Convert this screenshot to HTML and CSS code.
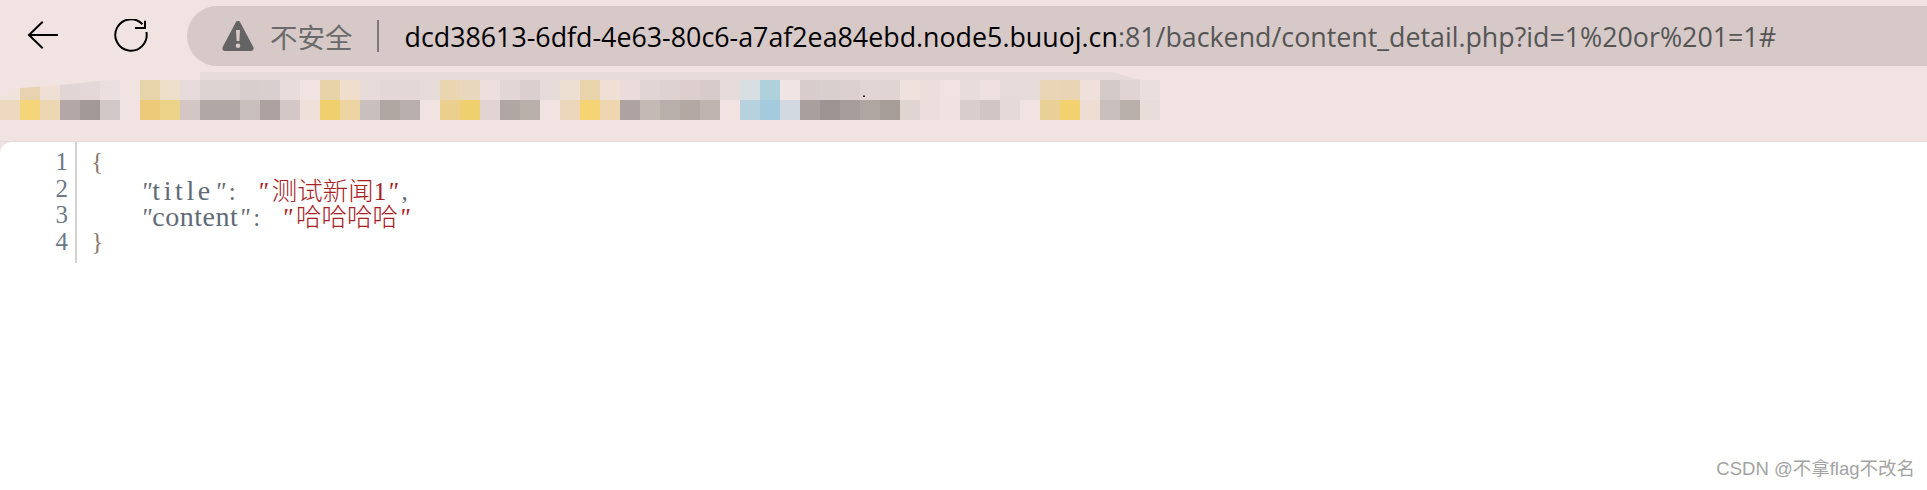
FILE: index.html
```html
<!DOCTYPE html>
<html lang="zh">
<head>
<meta charset="utf-8">
<title>content_detail</title>
<link rel="stylesheet" href="styles.css">
</head>
<body>
<header class="chrome">
  <div class="toolbar">
    <svg class="nav-icon back" width="34" height="30" viewBox="0 0 34 30"><path d="M32 14H2.500M16.700.7 3 14l13.700 13.300"/></svg>
    <svg class="nav-icon reload" width="34" height="34" viewBox="0 0 34 34"><path d="M32.400 13A15.700 15.700 0 1 1 28.500 5.300M31 1.700V9H21"/></svg>
    <div class="address">
      <svg class="warn" width="32" height="30" viewBox="0 0 32 30"><path fill-rule="evenodd" d="M16 0c1 0 1.800.5 2.300 1.400l13 24.500c1 1.900-.2 4.100-2.300 4.100H3C.9 30-.3 27.800.7 25.900l13-24.500C14.200.5 15 0 16 0Zm-2 9 .6 11h2.800L18 9Zm2 13.500a2.300 2.300 0 1 0 0 4.600 2.300 2.300 0 0 0 0-4.600Z"/></svg>
      <span class="insecure">不安全</span>
      <span class="divider"></span>
      <span class="url"><span class="host">dcd38613-6dfd-4e63-80c6-a7af2ea84ebd.node5.buuoj.cn</span>:81/backend/content_detail.php?id=1%20or%201=1#</span>
    </div>
  </div>
  <svg class="bookmarks" width="1160" height="69" viewBox="0 72 1160 69">
    <path class="smear" d="M200 80V71L240 66H1089L1140 80 1159 85V100H200Z"/>
    <g id="cells"></g>
    <path class="cover" d="M0 80H120L100 81 60 85 20 88 0 97Z"/>
    <rect x="863" y="95.500" width="2" height="1.500" fill="#222"/>
  </svg>
</header>
<main class="page">
  <div class="gutter">
    <div>1</div><div>2</div><div>3</div><div>4</div>
  </div>
  <div class="code">
    <div class="line"><span class="cell pun">{</span></div>
    <div class="line indent"><span class="key"><i class="cell">"</i><span class="title">title</span><i class="cell">"</i><span class="cell">:</span></span><span class="str gap"><i class="cell">"</i><span class="cjk">测试新闻</span><span class="digit">1</span><i class="cell">"</i></span><span class="cell key">,</span></div>
    <div class="line indent"><span class="key"><i class="cell">"</i><span class="content">content</span><i class="cell">"</i><span class="cell">:</span></span><span class="str gap"><i class="cell">"</i><span class="cjk">哈哈哈哈</span><i class="cell">"</i></span></div>
    <div class="line"><span class="cell pun">}</span></div>
  </div>
</main>
<div class="watermark">CSDN @不拿flag不改名</div>
<script src="mosaic.js"></script>
</body>
</html>
```

FILE: styles.css
```css
* { box-sizing: border-box; }
html, body { margin: 0; height: 100%; }
body {
  width: 1927px;
  height: 490px;
  overflow: hidden;
  background: #f0e3e2;
  position: relative;
  display: flex;
  flex-direction: column;
  font-family: "Open Sans", "Noto Sans CJK SC", sans-serif;
}
.chrome {
  height: 142px;
  flex: none;
  border-bottom: 1px solid #e6dad9;
}
.toolbar {
  height: 72px;
  padding: 6px 0 6px 26px;
  display: flex;
  align-items: center;
}
.nav-icon { fill: none; stroke: #000; stroke-width: 2; flex: none; }
.back { margin-right: 54px; }
.reload { margin-right: 39px; }
.address {
  flex: 1;
  height: 60px;
  background: #d6c9c8;
  border-radius: 30px 0 0 30px;
  display: flex;
  align-items: center;
  padding-left: 35px;
  white-space: nowrap;
}
.warn { fill: #646464; flex: none; margin-right: 16px; }
.insecure { font-size: 27.500px; color: #6b6b6b; font-family: "Noto Sans CJK SC", sans-serif; }
.divider { width: 2px; height: 32px; background: #7d7878; margin: 0 26px 0 24px; }
.url { font-size: 26.800px; color: #555; }
.host { color: #000; }
.bookmarks { display: block; }
.smear { fill: #e7dbda; }
.cover { fill: #f0e3e2; }
.page {
  flex: 1;
  background: #fff;
  border-radius: 12px 0 0 0;
  display: flex;
  align-items: flex-start;
}
.gutter {
  width: 77px;
  height: 121px;
  padding: 7px 7px 0 0;
  border-right: 2px solid #d2d2d2;
  text-align: right;
  font: 25px/26.600px "Liberation Serif", serif;
  color: #6d7a88;
}
.code {
  padding: 7px 0 0 14px;
  font: 25px/26.600px "Liberation Serif", serif;
  white-space: nowrap;
}
.line { height: 26.600px; }
.indent { padding-left: 49px; }
.cell { display: inline-block; width: 12.300px; text-align: center; }
i.cell { font-style: italic; }
.title { font-size: 28px; line-height: 1; letter-spacing: 3.600px; }
.content { font-size: 28px; line-height: 1; letter-spacing: .5px; }
.pun { color: #8a7a6c; }
.key { color: #5f6b76; }
.str { color: #a8201f; }
.gap { margin-left: 18px; }
.cjk {
  font-family: "Noto Sans CJK SC", sans-serif;
  font-size: 25.500px;
  font-weight: 300;
  line-height: 1;
  margin-left: 3px;
}
.digit { margin-left: 0; }
.watermark {
  position: absolute;
  right: 12px;
  bottom: 9px;
  font: 18.500px/24px "Liberation Sans", "Noto Sans CJK SC", sans-serif;
  color: #a3a3a3;
}
```

FILE: mosaic.js
```js
var top_ = ["f0e3dc","e8d2b0","efdfd5","e1d5d5","e4d9d8","ebe0df",0,"e8d4ab","eedfca","e6dada","dcd2d1","dcd2d1","d8cecd","d9cfce","e9dddc","f0e3e1","e8d3a8","eedecb","e7dbda","e3d7d7","e3d7d7",0,"e9d5b0","e9d7bd","eddfde","e2d6d6","dccfcf",0,"eddfd2","e9d3aa","efdfd4","e9dcda","e2d6d5","dfd3d2","dccfce","d8cccb",0,"d8dfe2","afd0dd","f0e5e2","d8cdcc","d9cfcd","dcd1cf","e1d6d4","e1d5d3","efe1de","ebdedd","f0e3e1","e9dddb","eee1e0",0,0,"ead5b7","e9d5b3","efe0dc","d4cac8","e1d5d3","ebdfdd"];
var bottom_ = ["ecd9c0","f4d577","edd7b2","b3a7a7","a39998","d2c8c7",0,"ecca79","edd38a","d3c6c5","b1a7a5","b1a7a5","c9bfbd","ada2a0","d3c8c6","efe1d9","efcf6e","ecd5a3","c9bfbc","afa5a1","b9afae",0,"eacf8f","eed06f","e1d4d3","b0a6a3","b9b0ac",0,"ecd7bd","f5d473","edd6b0","aea3a0","c5b9b6","b8aeab","b3a8a4","bfb4b0",0,"b7d2df","a4cbdd","d2d9e1","a9a09d","9d9491","a69d9a","afa6a2","a79e9a","e1d5d3","ebdedd","efe2e0","d9cecc","d1c6c4","e5dad8",0,"e9d097","f1d26e","edddd3","c9c0bd","b9afab","e8dddb"];
var g = document.getElementById("cells");
function row(list, y) {
  list.forEach(function (c, i) {
    if (!c) return;
    var r = document.createElementNS("http://www.w3.org/2000/svg", "rect");
    r.setAttribute("x", i * 20);
    r.setAttribute("y", y);
    r.setAttribute("width", 20);
    r.setAttribute("height", 20);
    r.setAttribute("fill", "#" + c);
    g.appendChild(r);
  });
}
row(top_, 80);
row(bottom_, 100);
```
